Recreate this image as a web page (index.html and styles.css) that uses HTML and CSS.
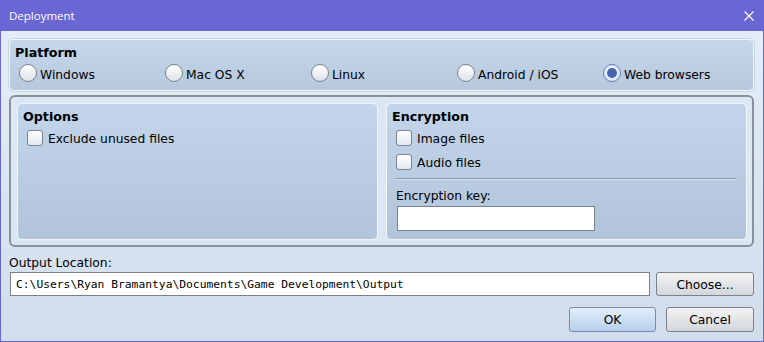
FILE: index.html
```html
<!DOCTYPE html>
<html lang="en">
<head>
  <meta charset="UTF-8" />
  <meta name="viewport" content="width=device-width, initial-scale=1.0"/>
  <title>Deployment</title>
  <link rel="stylesheet" href="styles.css">
</head>
<body>
  <div class="window">
    <div class="titlebar">
      <span class="title">Deployment</span>
      <svg class="close" viewBox="0 0 10 10"><path d="M0.5 0.5 9.5 9.5M9.5 0.5 0.5 9.5"/></svg>
    </div>

    <div class="content">
      <section class="group platform">
        <div class="group-title">Platform</div>
        <div class="radio-row">
          <label class="radio"><span class="dot"></span>Windows</label>
          <label class="radio"><span class="dot"></span>Mac OS X</label>
          <label class="radio"><span class="dot"></span>Linux</label>
          <label class="radio"><span class="dot"></span>Android / iOS</label>
          <label class="radio checked"><span class="dot"></span>Web browsers</label>
        </div>
      </section>

      <div class="frame">
        <section class="panel">
          <div class="group-title">Options</div>
          <label class="check"><span class="box"></span>Exclude unused files</label>
        </section>
        <section class="panel">
          <div class="group-title">Encryption</div>
          <label class="check"><span class="box"></span>Image files</label>
          <label class="check"><span class="box"></span>Audio files</label>
          <div class="separator"></div>
          <div class="field-label">Encryption key:</div>
          <div class="text-input key"></div>
        </section>
      </div>

      <div class="field-label output-label">Output Location:</div>
      <div class="output-row">
        <div class="text-input path">C:\Users\Ryan Bramantya\Documents\Game Development\Output</div>
        <button class="btn choose">Choose...</button>
      </div>

      <div class="actions">
        <button class="btn primary">OK</button>
        <button class="btn cancel">Cancel</button>
      </div>
    </div>
  </div>
</body>
</html>
```

FILE: styles.css
```css
body {
  margin: 0;
  font-family: 'DejaVu Sans', 'Liberation Sans', sans-serif;
  font-size: 12.3px;
  color: #000;
}
.window {
  width: 764px;
  height: 342px;
  box-sizing: border-box;
  border: 1px solid #6a67d5;
  border-top: 0;
  background: linear-gradient(#e5effc, #d1ddeb);
  overflow: hidden;
}
.titlebar {
  height: 31px;
  margin: 0 -1px;
  background: #6a67d5;
  display: flex;
  align-items: center;
  justify-content: space-between;
  padding: 0 10px 0 9px;
}
.title {
  font-family: 'Open Sans', 'Noto Sans', sans-serif;
  font-size: 11.5px;
  color: #fff;
}
.close {
  width: 10px;
  height: 10px;
  stroke: #fff;
  stroke-width: 1.1;
  fill: none;
}
.content {
  padding: 8px 9px 0 8px;
}
.group-title {
  font-weight: bold;
  font-size: 12.7px;
  line-height: 16px;
  padding: 5px 0 0 5px;
}
.group {
  border: 1px solid #f1f6fc;
  border-radius: 5px;
  background: linear-gradient(#c5d7eb, #b7c8dd);
  box-shadow: 0 0 0 1px #c8d4e2;
  padding-bottom: 8px;
}
.radio-row {
  display: flex;
  margin: 3px 0 0 9px;
}
.radio {
  width: 146px;
  height: 18px;
  display: flex;
  align-items: center;
  gap: 3px;
  padding-top: 3px;
  box-sizing: border-box;
}
.dot {
  width: 18px;
  height: 18px;
  box-sizing: border-box;
  border: 1px solid #7c838d;
  border-radius: 50%;
  background: linear-gradient(#ffffff, #dde3ea);
  flex-shrink: 0;
  margin-top: -3px;
  display: flex;
  align-items: center;
  justify-content: center;
}
.radio.checked .dot {
  border-color: #5d7fbf;
  box-shadow: inset 0 0 0 2px #dfe9f6;
}
.radio.checked .dot::after {
  content: '';
  width: 10px;
  height: 10px;
  border-radius: 50%;
  background: #4765ae;
}
.frame {
  margin-top: 4px;
  height: 152px;
  box-sizing: border-box;
  border: 2px solid #89919b;
  border-radius: 6px;
  padding: 6px 5px 5px 6px;
  display: grid;
  grid-template-columns: 361px 361px;
  gap: 8px;
  background: #dce7f4;
}
.panel {
  border: 1px solid #f0f5fb;
  border-radius: 5px;
  background: linear-gradient(#c2d5ea, #b2c4da);
}
.check {
  display: flex;
  align-items: center;
  gap: 5px;
  height: 18px;
  margin: 4px 0 0 9px;
  padding-top: 2px;
  box-sizing: border-box;
}
.check + .check {
  margin-top: 6px;
}
.box {
  width: 16px;
  height: 16px;
  box-sizing: border-box;
  border: 1px solid #7d838c;
  border-radius: 3px;
  background: linear-gradient(#ffffff, #e4e9ef);
  margin-top: -2px;
}
.separator {
  margin: 7px 9px 0 9px;
  height: 1px;
  background: #8e98a4;
  border-bottom: 1px solid #d6e2ef;
}
.field-label {
  line-height: 16px;
  margin: 8px 0 0 9px;
}
.text-input {
  box-sizing: border-box;
  background: #fff;
  border: 1px solid #7a8089;
}
.key {
  width: 198px;
  height: 25px;
  margin: 2px 0 0 10px;
}
.output-label {
  margin: 8px 0 0 0;
}
.output-row {
  display: flex;
  gap: 6px;
  margin: 1px 0 0 1px;
  height: 24px;
}
.path {
  flex: 1;
  font-family: 'DejaVu Sans Mono', 'Liberation Mono', monospace;
  font-size: 11.3px;
  line-height: 23px;
  padding-left: 5px;
  white-space: nowrap;
}
.btn {
  font-family: inherit;
  font-size: 12.3px;
  color: #000;
  border: 1px solid #7b8189;
  border-radius: 3px;
  background: linear-gradient(#f3f3f3, #d3d7dc);
  padding: 1px 0 0;
  box-sizing: border-box;
}
.choose {
  width: 98px;
}
.actions {
  display: flex;
  justify-content: flex-end;
  gap: 10px;
  margin-top: 11px;
}
.actions .btn {
  height: 25px;
}
.primary {
  width: 87px;
  border-color: #6f8db6;
  background: linear-gradient(#e3eefa, #b7d0ed);
}
.cancel {
  width: 88px;
}
```
